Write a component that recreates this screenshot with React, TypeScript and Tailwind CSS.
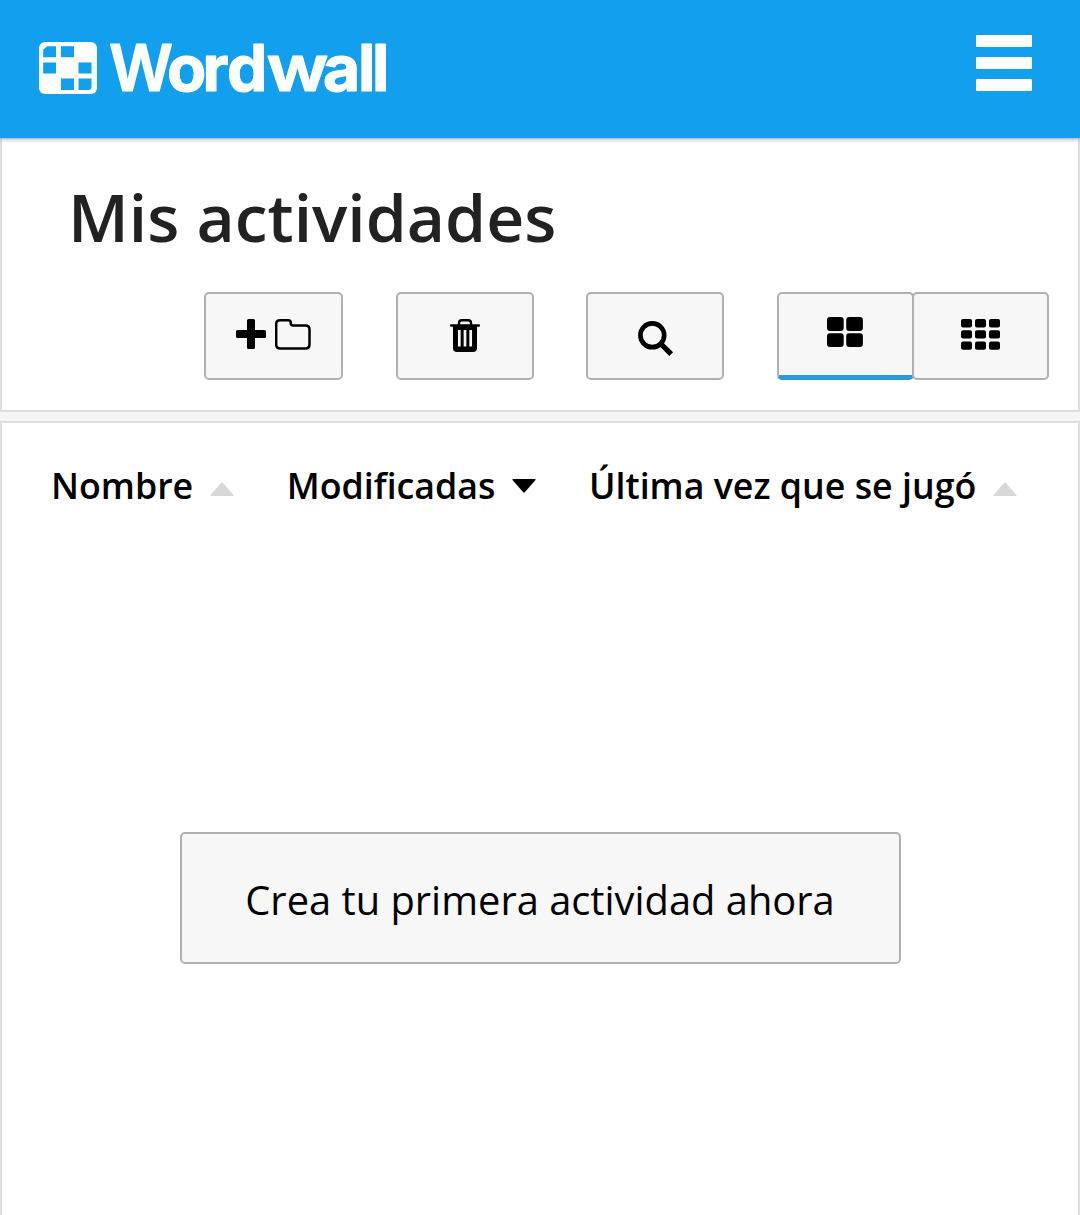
import React, { useState } from "react";

type View = "large" | "small";

const PlusIcon = () => (
  <svg width="30" height="30" viewBox="0 0 30 30" fill="currentColor">
    <path d="M12.500 0h5q1.500 0 1.500 1.500V11h9.500q1.500 0 1.500 1.500v5q0 1.500-1.500 1.500H19v9.500q0 1.500-1.500 1.500h-5q-1.500 0-1.500-1.500V19H1.500Q0 19 0 17.500v-5Q0 11 1.500 11H11V1.500Q11 0 12.500 0z" />
  </svg>
);

const FolderIcon = () => (
  <svg width="36" height="31" viewBox="0 0 36 31" fill="none" stroke="currentColor" strokeWidth="2.5" strokeLinejoin="round" className="mt-px">
    <path d="M5 1.300h8.200Q15.800 1.300 15.800 4v.6Q15.800 6.500 18 6.500h12.500q4 0 4 4v15q0 4-4 4H5.200q-4 0-4-4V5.200q0-3.900 3.800-3.900z" />
  </svg>
);

const TrashIcon = () => (
  <svg width="30" height="33" viewBox="0 0 30 33">
    <path d="M9 6.500V4q0-2.800 2.800-2.800h6.400Q21 1.200 21 4v2.500" fill="none" stroke="currentColor" strokeWidth="2.400" />
    <path d="M1 5.300h28q1 0 1 1.200t-1 1.200h-2V29q0 4-4 4H7q-4 0-4-4V7.700H1q-1 0-1-1.200t1-1.200z" fill="currentColor" />
    <path d="M9.300 11v16.500M15 11v16.500M20.700 11v16.500" stroke="#f7f7f7" strokeWidth="2.700" />
  </svg>
);

const SearchIcon = () => (
  <svg width="36" height="36" viewBox="0 0 36 36" fill="none" stroke="currentColor">
    <circle cx="14.300" cy="14.300" r="11.900" strokeWidth="4.700" />
    <path d="M22.500 22.500L33.200 33.200" strokeWidth="5.300" />
  </svg>
);

const LargeGridIcon = () => (
  <svg width="36" height="30" viewBox="0 0 36 30" fill="currentColor">
    <rect width="16.700" height="14" rx="3" />
    <rect x="19.200" width="16.700" height="14" rx="3" />
    <rect y="16.200" width="16.700" height="13.800" rx="3" />
    <rect x="19.200" y="16.200" width="16.700" height="13.800" rx="3" />
  </svg>
);

const SmallGridIcon = () => (
  <svg width="39" height="31" viewBox="0 0 39 31" fill="currentColor">
    {[0, 11.2, 22.4].map((y) => [0, 14, 28].map((x) => <rect key={`${x}-${y}`} x={x} y={y} width="11" height="8.400" rx="2" />))}
  </svg>
);

const Logo = () => (
  <svg width="360" height="100" viewBox="0 -20 360 100" fill="#fff">
    <rect y="2" width="58" height="52" rx="6" />
    <g fill="#129fee">
      <path d="M8 6.200h9v11H4.200v-7.500z" />
      <rect x="22" y="6.200" width="13" height="11" />
      <rect x="4.200" y="22.500" width="12.800" height="11" />
      <rect x="39.500" y="22.500" width="13" height="11" />
      <rect x="22" y="38.500" width="13" height="11.500" />
      <path d="M39.500 38.500h13v8q0 3.500-3.500 3.500h-9.500z" />
    </g>
    {/* letters are placed one by one, the wordmark is kerned very tight */}
    <text y="51" fontSize="64" stroke="#fff" strokeWidth="1.200" strokeLinejoin="round" className="font-['Inter',sans-serif] font-bold">
      <tspan x="70" textLength="64" lengthAdjust="spacingAndGlyphs" className="font-semibold">W</tspan>
      <tspan x="128 163.500 188">ord</tspan>
      <tspan x="227.500" textLength="62" lengthAdjust="spacingAndGlyphs" className="font-semibold">w</tspan>
      <tspan x="284 319 333">all</tspan>
    </text>
  </svg>
);

const columns = [
  { id: "name", label: "Nombre" },
  { id: "modified", label: "Modificadas" },
  { id: "played", label: "Última vez que se jugó" },
];

const toolButton = "flex h-[88px] items-center justify-center rounded-[5px] border-2 border-[#b0b0b0] bg-[#f7f7f7]";

const App: React.FC = () => {
  const [view, setView] = useState<View>("large");
  const [sortBy, setSortBy] = useState("modified");

  return (
    <div className="flex h-[1215px] w-[1080px] flex-col overflow-hidden bg-[#f5f5f5] font-['Open_Sans','Noto_Sans',sans-serif] text-black">
      <header className="z-10 flex h-[138px] shrink-0 items-start justify-between bg-[#129fee] pl-[39px] pr-12 shadow-[0_1px_4px_rgba(0,0,0,0.4)]">
        <a href="#" aria-label="Wordwall" className="mt-5">
          <Logo />
        </a>
        <button aria-label="Menú" className="mt-[35px] flex flex-col gap-[10.500px]">
          <span className="h-[11.700px] w-14 rounded-[1px] bg-white" />
          <span className="h-[11.700px] w-14 rounded-[1px] bg-white" />
          <span className="h-[11.700px] w-14 rounded-[1px] bg-white" />
        </button>
      </header>

      <section className="h-[274px] shrink-0 border-2 border-t-0 border-[#dedede] bg-white pt-[33px]">
        <h1 className="pl-[66px] text-[66px] font-semibold leading-[90px] text-[#222]">Mis actividades</h1>
        <div className="mt-[31px] flex justify-end pr-[29px]">
          <button aria-label="Nueva carpeta" className={`${toolButton} mr-[53px] w-[139px] gap-[9px] pb-[5px]`}>
            <PlusIcon />
            <FolderIcon />
          </button>
          <button aria-label="Papelera" className={`${toolButton} mr-[52px] w-[138px] pb-[2px]`}>
            <TrashIcon />
          </button>
          <button aria-label="Buscar" className={`${toolButton} mr-[53px] w-[138px] pl-[2px] pt-[5px]`}>
            <SearchIcon />
          </button>
          <button aria-label="Iconos grandes" onClick={() => setView("large")} className={`${toolButton} w-[137px] pr-px ${view === "large" ? "border-b-[5px] border-b-[#2b9bd3] pb-[5px]" : ""}`}>
            <LargeGridIcon />
          </button>
          <button aria-label="Iconos pequeños" onClick={() => setView("small")} className={`${toolButton} -ml-[2px] w-[137px] pb-[4px] ${view === "small" ? "border-b-[5px] border-b-[#2b9bd3]" : ""}`}>
            <SmallGridIcon />
          </button>
        </div>
      </section>

      <main className="mt-[9px] flex-1 border-2 border-b-0 border-[#dedede] bg-white">
        <div className="flex gap-[53px] pl-[49px] pt-[37px]">
          {columns.map((column) => (
            <button key={column.id} onClick={() => setSortBy(column.id)} className="flex items-center gap-[16.500px] whitespace-nowrap text-[35.750px] font-semibold leading-[50px]">
              {column.label}
              {sortBy === column.id ? (
                <svg width="24" height="14" viewBox="0 0 24 14" className="mt-px">
                  <path d="M1 0h22q1 0 .5 1L13 13q-1 1-2 0L.500 1Q0 0 1 0z" fill="#000" />
                </svg>
              ) : (
                <svg width="24" height="14" viewBox="0 0 24 14" className="mt-[7px]">
                  <path d="M1 14h22q1 0 .5-1L13 1q-1-1-2 0L.500 13q-.5 1 .5 1z" fill="#d8d8d8" />
                </svg>
              )}
            </button>
          ))}
        </div>
        <div className="mt-[322px] flex justify-center">
          <button className="h-[132px] w-[721px] rounded-[5px] border-2 border-[#b0b0b0] bg-[#f7f7f7] pt-1 text-[39.850px]">Crea tu primera actividad ahora</button>
        </div>
      </main>
    </div>
  );
};

export default App;
